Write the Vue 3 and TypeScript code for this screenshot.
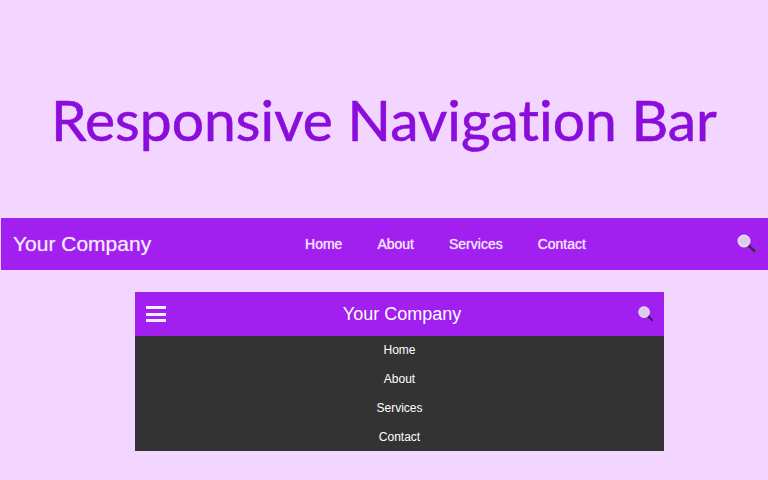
<template>
  <div class="page">
    <h1 class="title">Responsive Navigation Bar</h1>

    <!-- desktop bar -->
    <nav class="bar wide">
      <span class="logo">Your Company</span>
      <ul class="links">
        <li v-for="l in links" :key="l">{{ l }}</li>
      </ul>
      <svg class="search" width="19" height="19" viewBox="0 0 19 19">
        <line x1="11" y1="11" x2="17.5" y2="17" stroke="#3a2a48" stroke-width="2.4" stroke-linecap="round" />
        <circle cx="7" cy="7" r="5.8" fill="#dccbef" stroke="#eadff5" stroke-width="1.4" />
      </svg>
    </nav>

    <!-- mobile bar with open menu -->
    <div class="mobile">
      <nav class="bar narrow">
        <span class="burger"><i></i><i></i><i></i></span>
        <span class="logo small">Your Company</span>
        <svg class="search" width="15" height="15" viewBox="0 0 16 16">
          <line x1="10" y1="10" x2="15" y2="15" stroke="#2b1a38" stroke-width="2" stroke-linecap="round" />
          <circle cx="6.5" cy="6.5" r="5.6" fill="#dccbef" stroke="#eadff5" stroke-width="1.2" />
        </svg>
      </nav>
      <ul class="menu">
        <li v-for="l in links" :key="l">{{ l }}</li>
      </ul>
    </div>
  </div>
</template>

<script setup lang="ts">
const links: string[] = ['Home', 'About', 'Services', 'Contact']
</script>

<style>
html, body { margin: 0; background: #f2d6ff; }
</style>

<style scoped>
.page { width: 768px; height: 480px; overflow: hidden; background: #f2d6ff; font-family: "Liberation Sans", Arial, sans-serif; }
.title {
  height: 218px; margin: 0; display: flex; align-items: center; justify-content: center; padding-top: 20px; box-sizing: border-box;
  font-family: "Comic Sans MS", Lato, sans-serif; font-weight: 400; font-size: 57px; color: #8a0ddb; white-space: nowrap;
  font-variant-ligatures: none; -webkit-text-stroke: 0.6px #8a0ddb;
}
.bar { display: flex; align-items: center; justify-content: space-between; background: #a120f0; color: #fff; }
.wide { height: 52px; margin-left: 1px; padding: 0 12px; }
.logo { min-width: 141px; font-size: 21px; color: #f6eaff; text-shadow: 0 0 1px rgba(255,255,255,.6); }
.links { display: flex; gap: 35px; list-style: none; margin: 0; padding: 0; font-size: 14px; color: #f6e6ff; text-shadow: 0 0 1px rgba(255,255,255,.8); }
.search { display: block; margin-top: -2px; }
.mobile { width: 529px; margin: 22px 0 0 135px; }
.narrow { height: 44px; padding: 0 11px; }
.small { min-width: 0; font-size: 18px; color: #fff; text-shadow: none; }
.burger { display: flex; flex-direction: column; gap: 3.5px; width: 20px; }
.burger i { display: block; height: 3px; background: #f8eeff; }
.menu { list-style: none; margin: 0; padding: 0; height: 115px; background: #333; color: #fff; font-size: 12px; }
.menu li { height: 29px; line-height: 29px; text-align: center; }
</style>
